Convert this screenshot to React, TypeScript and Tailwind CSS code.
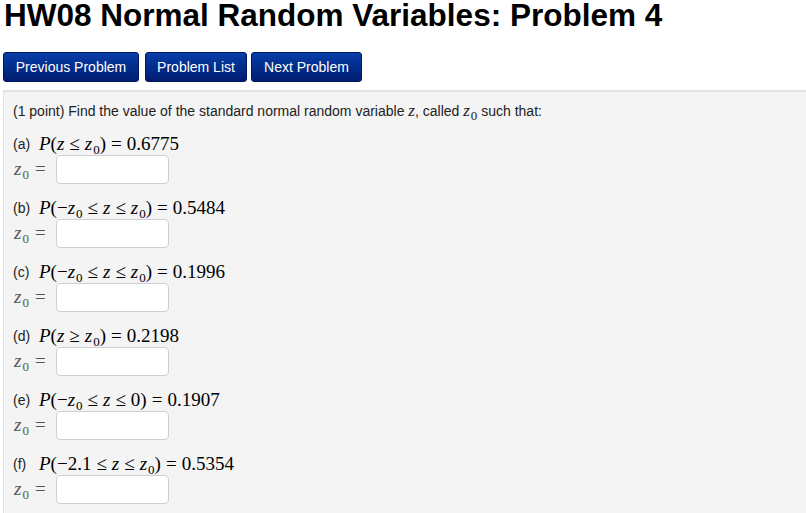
import React from 'react';

const serif = "font-['Liberation_Serif','DejaVu_Serif',serif]";

function Z({ sub = true }: { sub?: boolean }) {
  return (
    <span>
      <i>z</i>
      {sub && <span className="text-[13px] leading-none not-italic relative top-[4px] ml-[1px]">0</span>}
    </span>
  );
}

function Rel({ children }: { children: React.ReactNode }) {
  return <span className="mx-[5px]">{children}</span>;
}

type Part = { label: string; math: React.ReactNode };

const parts: Part[] = [
  {
    label: '(a)',
    math: (
      <>
        <i>P</i>(<i>z</i>
        <Rel>≤</Rel>
        <Z />)<Rel>=</Rel>0.6775
      </>
    ),
  },
  {
    label: '(b)',
    math: (
      <>
        <i>P</i>(−<Z />
        <Rel>≤</Rel>
        <i>z</i>
        <Rel>≤</Rel>
        <Z />)<Rel>=</Rel>0.5484
      </>
    ),
  },
  {
    label: '(c)',
    math: (
      <>
        <i>P</i>(−<Z />
        <Rel>≤</Rel>
        <i>z</i>
        <Rel>≤</Rel>
        <Z />)<Rel>=</Rel>0.1996
      </>
    ),
  },
  {
    label: '(d)',
    math: (
      <>
        <i>P</i>(<i>z</i>
        <Rel>≥</Rel>
        <Z />)<Rel>=</Rel>0.2198
      </>
    ),
  },
  {
    label: '(e)',
    math: (
      <>
        <i>P</i>(−<Z />
        <Rel>≤</Rel>
        <i>z</i>
        <Rel>≤</Rel>0)<Rel>=</Rel>0.1907
      </>
    ),
  },
  {
    label: '(f)',
    math: (
      <>
        <i>P</i>(−2.1<Rel>≤</Rel>
        <i>z</i>
        <Rel>≤</Rel>
        <Z />)<Rel>=</Rel>0.5354
      </>
    ),
  },
];

const buttons = [
  { text: 'Previous Problem', cls: 'w-[136px]' },
  { text: 'Problem List', cls: 'w-[102px] ml-[6px]' },
  { text: 'Next Problem', cls: 'w-[111px] ml-[4px]' },
];

export default function App() {
  return (
    <div className="w-[806px] h-[513px] overflow-hidden bg-white font-['Liberation_Sans',Arial,sans-serif] text-[#222]">
      <h1 className="pl-[4px] text-[31.5px] leading-[32px] -mt-[1px] font-bold text-black whitespace-nowrap">
        HW08 Normal Random Variables: Problem 4
      </h1>

      <div className="flex pl-[3px] mt-[21px]">
        {buttons.map((b) => (
          <button
            key={b.text}
            className={`${b.cls} h-[30px] rounded-[3px] bg-gradient-to-b from-[#083da8] to-[#001d70] text-white text-[14px] border border-[#00185c]`}
          >
            {b.text}
          </button>
        ))}
      </div>

      <div className="ml-[3px] mt-[8px] bg-[#f4f4f4] border-t-2 border-l border-[#e2e2e2] pl-[9px] pt-[10px] pb-[20px]">
        <p className="text-[14px] leading-[18px] whitespace-nowrap">
          (1 point) Find the value of the standard normal random variable{' '}
          <i className={`${serif} text-[17px]`}>z</i>, called{' '}
          <span className={`${serif} text-[17px]`}>
            <Z />
          </span>{' '}
          such that:
        </p>

        <div className="flex flex-col gap-[12px] mt-[12px]">
          {parts.map((p) => (
            <div key={p.label}>
              <div className="flex items-center h-[22px] pt-[2px]">
                <span className="text-[14px] w-[26px]">{p.label}</span>
                <span className={`${serif} text-[19px] text-black whitespace-nowrap`}>{p.math}</span>
              </div>
              <div className="flex items-center h-[29px] mt-[1px]">
                <span className={`${serif} text-[19px] text-[#555] w-[43px] pl-[1px] whitespace-nowrap`}>
                  <Z />
                  <span className="ml-[6px]">=</span>
                </span>
                <input
                  type="text"
                  className="w-[113px] h-[29px] bg-white border border-[#cfcfcf] rounded-[4px] outline-none"
                />
              </div>
            </div>
          ))}
        </div>
      </div>
    </div>
  );
}
